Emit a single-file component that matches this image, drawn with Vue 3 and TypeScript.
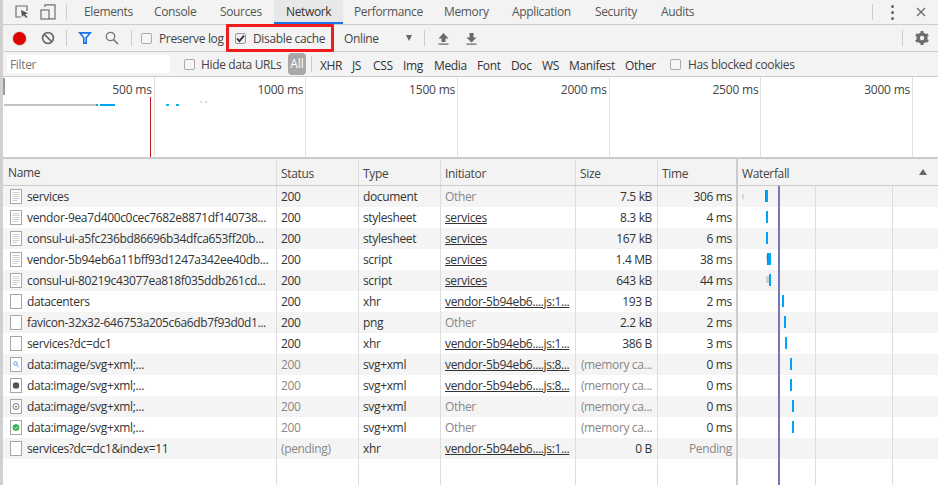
<script setup lang="ts">
interface Seg { x: number; w: number; c: string; t?: number; h?: number }
interface Row {
  name: string; status: string; type: string; init: string; link: boolean;
  size: string; time: string; icon: string; dim?: boolean; dimSize?: boolean; dimTime?: boolean; bars: Seg[];
}
const blue = '#00a6f5';
const rows: Row[] = [
  { name: 'services', status: '200', type: 'document', init: 'Other', link: false, size: '7.5 kB', time: '306 ms', icon: 'doc',
    bars: [{ x: 4, w: 2, c: '#d4d4d4', t: 8, h: 5 }, { x: 27, w: 1, c: '#00a85a' }, { x: 28, w: 2, c: blue }] },
  { name: 'vendor-9ea7d400c0cec7682e8871df140738...', status: '200', type: 'stylesheet', init: 'services', link: true, size: '8.3 kB', time: '4 ms', icon: 'doc', bars: [{ x: 28, w: 2, c: blue }] },
  { name: 'consul-ui-a5fc236bd86696b34dfca653ff20b...', status: '200', type: 'stylesheet', init: 'services', link: true, size: '167 kB', time: '6 ms', icon: 'doc', bars: [{ x: 28, w: 2, c: blue }] },
  { name: 'vendor-5b94eb6a11bff93d1247a342ee40db...', status: '200', type: 'script', init: 'services', link: true, size: '1.4 MB', time: '38 ms', icon: 'doc',
    bars: [{ x: 28, w: 1, c: '#d4d4d4', t: 6, h: 5 }, { x: 29, w: 1, c: '#00a85a' }, { x: 30, w: 3, c: blue }] },
  { name: 'consul-ui-80219c43077ea818f035ddb261cd...', status: '200', type: 'script', init: 'services', link: true, size: '643 kB', time: '44 ms', icon: 'doc',
    bars: [{ x: 28, w: 3, c: '#cfcfcf', t: 6, h: 7 }, { x: 31, w: 2, c: blue }] },
  { name: 'datacenters', status: '200', type: 'xhr', init: 'vendor-5b94eb6....js:1...', link: true, size: '193 B', time: '2 ms', icon: 'blank', bars: [{ x: 44, w: 2, c: blue }] },
  { name: 'favicon-32x32-646753a205c6a6db7f93d0d1...', status: '200', type: 'png', init: 'Other', link: false, size: '2.2 kB', time: '2 ms', icon: 'blank', bars: [{ x: 46, w: 2, c: blue }] },
  { name: 'services?dc=dc1', status: '200', type: 'xhr', init: 'vendor-5b94eb6....js:1...', link: true, size: '386 B', time: '3 ms', icon: 'blank', bars: [{ x: 47, w: 2, c: blue }] },
  { name: 'data:image/svg+xml;...', status: '200', type: 'svg+xml', init: 'vendor-5b94eb6....js:8...', link: true, size: '(memory ca...', time: '0 ms', icon: 'search', dim: true, dimSize: true, bars: [{ x: 52, w: 2, c: blue }] },
  { name: 'data:image/svg+xml;...', status: '200', type: 'svg+xml', init: 'vendor-5b94eb6....js:8...', link: true, size: '(memory ca...', time: '0 ms', icon: 'dark', dim: true, dimSize: true, bars: [{ x: 52, w: 2, c: blue }] },
  { name: 'data:image/svg+xml;...', status: '200', type: 'svg+xml', init: 'Other', link: false, size: '(memory ca...', time: '0 ms', icon: 'ring', dim: true, dimSize: true, bars: [{ x: 54, w: 2, c: blue }] },
  { name: 'data:image/svg+xml;...', status: '200', type: 'svg+xml', init: 'Other', link: false, size: '(memory ca...', time: '0 ms', icon: 'ok', dim: true, dimSize: true, bars: [{ x: 54, w: 2, c: blue }] },
  { name: 'services?dc=dc1&index=11', status: '(pending)', type: 'xhr', init: 'vendor-5b94eb6....js:1...', link: true, size: '0 B', time: 'Pending', icon: 'blank', dim: true, dimTime: true, bars: [] },
];
const tabs = [
  { label: 'Elements', w: 70 }, { label: 'Console', w: 66 }, { label: 'Sources', w: 67 }, { label: 'Network', w: 69, active: true },
  { label: 'Performance', w: 88 }, { label: 'Memory', w: 68 }, { label: 'Application', w: 83 }, { label: 'Security', w: 66 }, { label: 'Audits', w: 60 },
];
const types = [
  { t: 'XHR', w: 33 }, { t: 'JS', w: 21 }, { t: 'CSS', w: 30 }, { t: 'Img', w: 31 }, { t: 'Media', w: 43 },
  { t: 'Font', w: 34 }, { t: 'Doc', w: 31 }, { t: 'WS', w: 27 }, { t: 'Manifest', w: 56 }, { t: 'Other', w: 45 },
];
const ticks = ['500 ms', '1000 ms', '1500 ms', '2000 ms', '2500 ms', '3000 ms'];
</script>

<template>
  <div class="page">
    <div class="tabbar">
      <svg class="ti" width="16" height="16" viewBox="0 0 16 16" style="margin-left:11px">
        <path d="M7 13H2V2h11v5" fill="none" stroke="#6e6e6e" stroke-width="1.2" />
        <path d="M7 6l7 3.2-3 1 2.5 2.8-1.3 1.1-2.500-2.800L8 13z" fill="#555" />
      </svg>
      <svg class="ti" width="16" height="16" viewBox="0 0 16 16" style="margin-left:10px">
        <path d="M5 3V.8h10v14H9" fill="none" stroke="#6e6e6e" stroke-width="1.2" />
        <rect x="1" y="6" width="8" height="9" fill="none" stroke="#6e6e6e" stroke-width="1.2" />
      </svg>
      <span class="vsep tab-sep"></span>
      <div class="tabs">
        <span v-for="t in tabs" :key="t.label" class="tab" :class="{ active: t.active }" :style="{ width: t.w + 'px' }">{{ t.label }}</span>
      </div>
      <span class="spacer"></span>
      <span class="vsep"></span>
      <span class="dots"><i></i><i></i><i></i></span>
      <svg class="close" width="10" height="10" viewBox="0 0 10 10"><path d="M1 1l8 8M9 1l-8 8" stroke="#6e6e6e" stroke-width="1.4" /></svg>
    </div>

    <div class="toolbar">
      <span class="rec"></span>
      <svg class="clear" width="14" height="14" viewBox="0 0 14 14"><circle cx="7" cy="7" r="5.400" fill="none" stroke="#6e6e6e" stroke-width="1.800" /><path d="M3.200 3.200l7.600 7.600" stroke="#6e6e6e" stroke-width="1.800" /></svg>
      <span class="vsep sep1"></span>
      <svg class="funnel" width="16" height="14" viewBox="0 0 16 14"><path d="M1 1h14L10 7v6H6V7z M4.500 2.800L7.600 6.400v4.900h.8V6.400l3.100-3.600z" fill="#1a73e8" fill-rule="evenodd" /></svg>
      <svg class="search" width="14" height="14" viewBox="0 0 14 14"><circle cx="5.500" cy="5.500" r="4.200" fill="none" stroke="#777" stroke-width="1.300" /><path d="M8.700 8.700l4.300 4.300" stroke="#777" stroke-width="1.600" /></svg>
      <span class="vsep sep2"></span>
      <span class="cb preserve"></span>
      <span class="lbl preserve-l">Preserve log</span>
      <label class="dis">
        <span class="cb checked"><svg width="9" height="9" viewBox="0 0 9 9"><path d="M1 4.500l2.400 2.600L8 1.600" fill="none" stroke="#333" stroke-width="1.800" /></svg></span>
        <span class="lbl dis-l">Disable cache</span>
        <span class="redbox"></span>
      </label>
      <span class="lbl online">Online</span>
      <span class="caret"></span>
      <span class="vsep sep3"></span>
      <svg class="arr up" width="11" height="13" viewBox="0 0 11 13"><path d="M5.500 1L10.500 6.500H7.500V10H3.500V6.500H.5zM.5 11.500h10v1.200H.5z" fill="#6a6a6a" /></svg>
      <svg class="arr down" width="11" height="13" viewBox="0 0 11 13"><path d="M3.500 1h4v4.500h3L5.500 10.500.5 5.500h3zM.5 11.500h10v1.200H.5z" fill="#6a6a6a" /></svg>
      <span class="spacer"></span>
      <span class="vsep"></span>
      <svg class="gear" width="14" height="14" viewBox="-7 -7 14 14">
        <circle r="4.100" fill="none" stroke="#6e6e6e" stroke-width="3" />
        <g fill="#6e6e6e">
          <rect x="-1.500" y="-7" width="3" height="14" />
          <rect x="-1.500" y="-7" width="3" height="14" transform="rotate(60)" />
          <rect x="-1.500" y="-7" width="3" height="14" transform="rotate(120)" />
        </g>
        <circle r="2.200" fill="#f3f3f3" />
      </svg>
    </div>

    <div class="filterbar">
      <span class="filter">Filter</span>
      <span class="cb hide"></span>
      <span class="lbl hide-l">Hide data URLs</span>
      <span class="all">All</span>
      <span class="vsep sep4"></span>
      <span v-for="t in types" :key="t.t" class="type" :style="{ width: t.w + 'px' }">{{ t.t }}</span>
      <span class="cb blocked"></span>
      <span class="lbl blocked-l">Has blocked cookies</span>
    </div>

    <div class="overview">
      <div class="scrub"></div>
      <div class="ticks">
        <span v-for="t in ticks" :key="t" class="tick">{{ t }}</span>
      </div>
      <span class="ov ov1"></span><span class="ov ov2"></span><span class="ov ov3"></span>
      <span class="ov ov4"></span><span class="ov ov5"></span>
      <span class="ov ov6"></span><span class="ov ov7"></span>
      <span class="redline"></span>
    </div>

    <div class="table">
      <div class="row head">
        <div class="c name">Name</div>
        <div class="c status">Status</div>
        <div class="c type-c">Type</div>
        <div class="c init">Initiator</div>
        <div class="c size tleft">Size</div>
        <div class="c time tleft">Time</div>
        <div class="c wf">Waterfall<span class="sort"></span></div>
      </div>
      <div class="body">
        <div v-for="(r, i) in rows" :key="i" class="row" :class="{ odd: i % 2 === 0 }">
          <div class="c name">
            <svg class="ficon" width="12" height="15" viewBox="0 0 12 15">
              <rect x=".5" y=".5" width="11" height="14" fill="#fff" stroke="#a6a6a6" />
              <g v-if="r.icon === 'doc'" stroke="#cfcfcf"><path d="M2.500 3.500h7M2.500 5.500h7M2.500 7.500h7M2.500 9.500h7M2.500 11.500h5" /></g>
              <g v-else-if="r.icon === 'search'"><circle cx="5.400" cy="6.500" r="1.700" fill="none" stroke="#5a8cf0" /><path d="M6.700 8l2 1.800" stroke="#5a8cf0" /></g>
              <circle v-else-if="r.icon === 'dark'" cx="6" cy="7.500" r="3.200" fill="#555" />
              <g v-else-if="r.icon === 'ring'"><circle cx="6" cy="7.500" r="3" fill="none" stroke="#777" /><circle cx="6" cy="7.500" r="1" fill="#777" /></g>
              <g v-else-if="r.icon === 'ok'"><circle cx="6" cy="7.500" r="3.300" fill="#2aae4a" /><path d="M4.500 7.500l1.200 1.200L7.700 6.500" fill="none" stroke="#fff" /></g>
            </svg>
            <span class="nm">{{ r.name }}</span>
          </div>
          <div class="c status" :class="{ grey: r.dim }">{{ r.status }}</div>
          <div class="c type-c">{{ r.type }}</div>
          <div class="c init"><span :class="r.link ? 'link' : 'grey'">{{ r.init }}</span></div>
          <div class="c size" :class="{ grey: r.dimSize }">{{ r.size }}</div>
          <div class="c time" :class="{ grey: r.dimTime }">{{ r.time }}</div>
          <div class="c wf bars">
            <span v-for="(b, j) in r.bars" :key="j" class="bar"
              :style="{ left: b.x + 'px', width: b.w + 'px', background: b.c, top: (b.t ?? 4) + 'px', height: (b.h ?? 12) + 'px' }"></span>
          </div>
        </div>
        <div class="row filler">
          <div class="c name"></div><div class="c status"></div><div class="c type-c"></div>
          <div class="c init"></div><div class="c size"></div><div class="c time"></div><div class="c wf"></div>
        </div>
        <div class="wfgrid"><i></i><i></i></div>
        <span class="purple"></span>
      </div>
    </div>
  </div>
</template>

<style>
html, body { margin: 0; padding: 0; background: #fff; overflow: hidden; }
</style>

<style scoped>
.page {
  width: 938px; height: 485px; box-sizing: border-box; display: flex; flex-direction: column;
  font: 12px/16px "Open Sans", "Noto Sans", sans-serif; letter-spacing: -0.35px; color: #333;
  background: #f3f3f3; border-left: 3px solid #d0d0d0; overflow: hidden;
}
.tabbar, .toolbar, .filterbar { display: flex; align-items: center; background: #f3f3f3; flex: none; }
.tabbar { height: 25px; box-sizing: border-box; border-bottom: 1px solid #ccc; }
.toolbar { height: 27px; box-sizing: border-box; border-bottom: 1px solid #ccc; }
.filterbar { height: 25px; box-sizing: border-box; border-bottom: 1px solid #ccc; }
.spacer { flex: 1; }
.vsep { width: 1px; height: 16px; background: #ccc; flex: none; }
.ti { flex: none; }
.tab-sep { margin-left: 10px; }
.tabs { display: flex; height: 24px; margin-left: 4px; }
.tab { display: flex; align-items: center; padding-left: 13px; box-sizing: border-box; color: #555; height: 24px; }
.tab.active { background: #e8e8e8; color: #333; border-bottom: 2px solid #1a73e8; padding-top: 2px; padding-left: 12px; }
.tab.active + .tab { padding-left: 11px; }
.dots { display: flex; flex-direction: column; gap: 3px; margin-left: 18px; width: 3px; }
.dots i { width: 3px; height: 3px; border-radius: 50%; background: #666; }
.close { margin-left: 22px; margin-right: 12px; }

.rec { width: 13px; height: 13px; border-radius: 50%; background: #e00000; margin-left: 10px; flex: none; box-shadow: 0 0 2px #a88; }
.clear { margin-left: 15px; flex: none; }
.sep1 { margin-left: 11px; }
.funnel { margin-left: 10px; flex: none; }
.search { margin-left: 12px; flex: none; }
.sep2 { margin-left: 12px; }
.cb { width: 11px; height: 11px; box-sizing: border-box; border: 1px solid #aaa; border-radius: 2px; background: #f6f6f6; flex: none; display: flex; align-items: center; justify-content: center; }
.cb.checked { background: #eee; border-color: #999; }
.preserve { margin-left: 9px; }
.preserve-l { margin-left: 7px; width: 67px; }
.lbl { color: #444; white-space: nowrap; padding-top: 2px; }
.dis { position: relative; display: flex; align-items: center; margin-left: 8px; width: 99px; height: 26px; flex: none; }
.dis .cb { margin-left: 1px; }
.dis-l { margin-left: 7px; }
.redbox { position: absolute; left: -8px; top: -1px; width: 108px; height: 28px; box-sizing: border-box; border: 3px solid #f01b1b; border-radius: 1px; pointer-events: none; }
.online { margin-left: 11px; width: 62px; }
.caret { width: 0; height: 0; border-left: 3.500px solid transparent; border-right: 3.500px solid transparent; border-top: 6px solid #666; flex: none; }
.sep3 { margin-left: 12px; }
.arr { flex: none; }
.up { margin-left: 13px; }
.down { margin-left: 17px; }
.gear { margin-left: 12px; margin-right: 9px; flex: none; }

.filter { background: #fff; width: 163px; height: 18px; margin-left: 4px; line-height: 20px; padding-left: 3px; box-sizing: border-box; color: #777; flex: none; }
.hide { margin-left: 14px; }
.hide-l { margin-left: 6px; width: 87px; }
.all { width: 18px; height: 22px; background: #a8a8a8; color: #fff; border-radius: 4px; text-align: center; line-height: 22px; flex: none; letter-spacing: 0; }
.sep4 { margin-left: 5px; }
.type { color: #333; box-sizing: border-box; flex: none; padding-top: 3px; }
.sep4 + .type { margin-left: 8px; width: 32px !important; }
.blocked-l { margin-left: 7px; }

.overview { position: relative; height: 80px; background: #fff; border-bottom: 2px solid #ccc; flex: none; }
.scrub { position: absolute; left: 0; top: 1px; width: 2px; height: 17px; background: #999; }
.ticks { display: flex; height: 100%; }
.tick { width: 151.700px; flex: none; box-sizing: border-box; text-align: right; border-right: 1px solid #e0e0e0; padding: 5px 2px 0 0; color: #444; letter-spacing: -0.2px; }
.ov { position: absolute; top: 27px; height: 2px; }
.ov1 { left: 1px; width: 92px; background: #c4c4c4; }
.ov2 { left: 93px; width: 2px; background: #1aa5c8; }
.ov3 { left: 97px; width: 15px; background: #00a6f5; }
.ov4 { left: 163px; width: 3px; background: #1ab0dd; }
.ov5 { left: 173px; width: 3px; background: #1ab0dd; }
.ov6 { left: 197px; width: 2px; top: 24px; background: #ddd; }
.ov7 { left: 202px; width: 2px; top: 24px; background: #ddd; }
.redline { position: absolute; left: 147px; top: 20px; bottom: 0; width: 1px; background: #c8161a; }

.table { flex: 1; display: flex; flex-direction: column; background: #fff; min-height: 0; }
.row { display: flex; height: 21px; flex: none; line-height: 22px; background: #fff; }
.row.odd { background: #f4f4f4; }
.head { height: 27px; line-height: 29px; background: #f3f3f3; border-bottom: 1px solid #ccc; box-sizing: border-box; color: #444; }
.body { flex: 1; position: relative; display: flex; flex-direction: column; min-height: 0; }
.filler { flex: 1; height: auto; }
.c { box-sizing: border-box; border-right: 1px solid #ddd; padding: 0 4px; white-space: nowrap; overflow: hidden; flex: none; }
.name { width: 274px; padding-left: 5px; display: flex; align-items: center; }
.status { width: 82px; }
.type-c { width: 82px; }
.init { width: 135px; }
.size { width: 82px; text-align: right; padding-right: 5px; }
.time { width: 80px; text-align: right; border-right: 2px solid #ccc; }
.tleft { text-align: left; }
.wf { flex: 1; width: 0; border-right: none; position: relative; }
.head .wf { overflow: visible; }
.ficon { flex: none; margin-left: 2px; margin-right: 5px; }
.nm { min-width: 0; padding-top: 1px; }
.grey { color: #888; }
.link { color: #333; text-decoration: underline; }
.sort { position: absolute; right: 11px; top: 10px; width: 0; height: 0; border-left: 4px solid transparent; border-right: 4px solid transparent; border-bottom: 6px solid #666; }
.bars { overflow: visible; padding: 0; }
.bar { position: absolute; }
.wfgrid { position: absolute; left: 735px; right: 0; top: 0; bottom: 0; pointer-events: none; }
.wfgrid i { position: absolute; top: 0; bottom: 0; width: 1px; background: #ddd; }
.wfgrid i:nth-child(1) { left: 77px; }
.wfgrid i:nth-child(2) { left: 154px; }
.purple { position: absolute; left: 775px; top: 0; bottom: 0; width: 2px; background: #7478b4; }
</style>
